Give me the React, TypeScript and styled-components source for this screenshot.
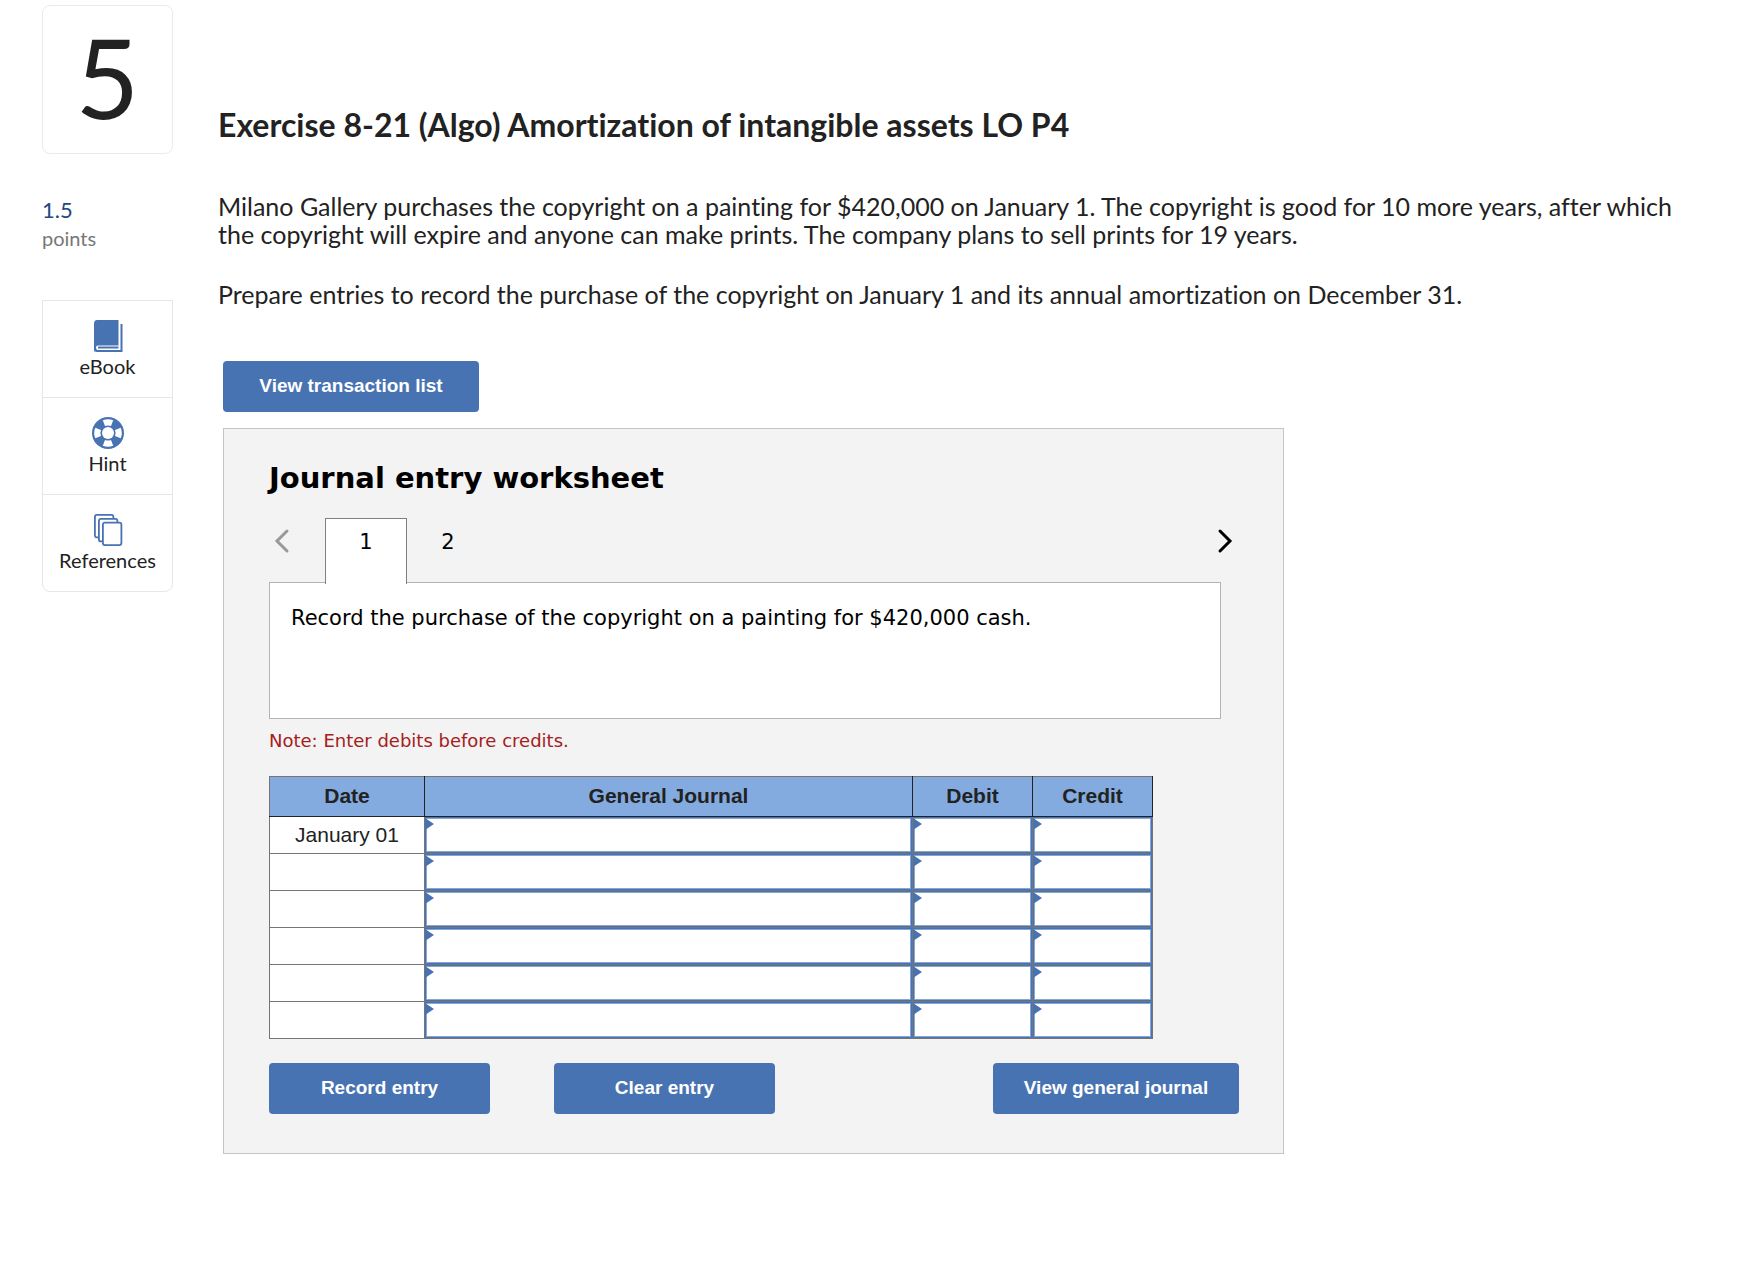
import React from "react";
import styled, { createGlobalStyle } from "styled-components";

const BLUE = "#4873b3";
const BODY_FONT = `Lato, "Open Sans", sans-serif`;
const SHEET_FONT = `Verdana, "DejaVu Sans", sans-serif`;
const GRID_FONT = `Arial, "Liberation Sans", sans-serif`;

const GlobalStyle = createGlobalStyle`
  *, *::before, *::after { box-sizing: border-box; }
  body {
    margin: 0;
    background: #fff;
    color: #222;
    font-family: ${BODY_FONT};
    font-variant-ligatures: none;
  }
  button, input { font: inherit; }
`;

const Page = styled.div`
  display: flex;
  align-items: flex-start;
  gap: 45px;
  padding: 5px 56px 48px 42px;
`;

const Sidebar = styled.aside`
  flex: none;
  width: 131px;
`;

const QuestionNumber = styled.div`
  display: flex;
  align-items: center;
  justify-content: center;
  height: 149px;
  padding-bottom: 8px;
  border: 1px solid #ebebeb;
  border-radius: 8px;
  font-size: 110px;
  line-height: 1;
`;

const Points = styled.div`
  margin: 42px 0 48px;
  font-size: 20px;
  line-height: 28px;
  color: #777;
`;

const PointsValue = styled.div`
  font-size: 22px;
  color: #23477f;
`;

const ToolList = styled.nav`
  display: flex;
  flex-direction: column;
  border: 1px solid #e6e6e6;
  border-radius: 0 0 8px 8px;
`;

const ToolLink = styled.a`
  box-sizing: content-box;
  display: flex;
  flex-direction: column;
  align-items: center;
  gap: 2px;
  height: 77px;
  padding-top: 19px;
  font-size: 20px;
  line-height: 24px;
  color: #222;
  text-decoration: none;

  & + & { border-top: 1px solid #e6e6e6; }
`;

const Main = styled.main`
  flex: 1;
  min-width: 0;
  padding-top: 102px;
`;

const Title = styled.h1`
  margin: 0 0 49px;
  font-size: 32px;
  line-height: 36px;
  font-weight: 700;
`;

const Paragraph = styled.p`
  margin: 0 0 32px;
  font-size: 25px;
  line-height: 28px;
`;

const Workspace = styled.section`
  display: flex;
  flex-direction: column;
  align-items: flex-start;
  gap: 16px;
  margin: 53px 0 0 5px;
`;

const Button = styled.button<{ $width: number }>`
  width: ${(p) => p.$width}px;
  height: 51px;
  padding: 0 0 2px;
  border: 0;
  border-radius: 4px;
  background: ${BLUE};
  color: #fff;
  font-family: ${GRID_FONT};
  font-size: 19px;
  font-weight: 700;
  cursor: pointer;
`;

const Worksheet = styled.div`
  width: 100%;
  max-width: 1061px;
  padding: 31px 44px 39px 45px;
  border: 1px solid #c4c4c4;
  background: #f3f3f3;
  font-family: ${SHEET_FONT};
  color: #000;
`;

const SheetTitle = styled.h2`
  margin: 0 0 22px;
  font-size: 29px;
  line-height: 36px;
  font-weight: 700;
`;

const TabBar = styled.div`
  display: flex;
  align-items: flex-start;
  margin-bottom: -2px;
`;

const Tabs = styled.div`
  flex: 1;
  display: flex;
  margin-left: 30px;
`;

const Arrow = styled.button`
  display: flex;
  align-items: center;
  justify-content: center;
  width: 26px;
  height: 46px;
  padding: 0;
  border: 0;
  background: none;
  color: #000;

  &:disabled { color: #999; }
`;

const Tab = styled.button<{ $active?: boolean }>`
  position: relative;
  width: 82px;
  height: 66px;
  padding: 0 0 20px;
  border: 1px solid ${(p) => (p.$active ? "#808080" : "transparent")};
  border-bottom: 0;
  background: ${(p) => (p.$active ? "#fff" : "none")};
  color: #000;
  font-size: 21px;
`;

const Instruction = styled.div`
  min-height: 137px;
  margin-right: 18px;
  padding: 21px;
  border: 1px solid #b3b3b3;
  background: #fff;
  font-size: 21px;
  line-height: 28px;
`;

const Note = styled.p`
  margin: 10px 0 23px;
  color: #a4201c;
  font-size: 18px;
  line-height: 24px;
`;

const JournalTable = styled.table`
  width: 884px;
  table-layout: fixed;
  border-collapse: collapse;
  background: #fff;
  color: #222;
  font-family: ${GRID_FONT};
  font-size: 21px;
  line-height: 24px;
`;

const Column = styled.col<{ $width: number }>`
  width: ${(p) => p.$width}px;
`;

const HeadCell = styled.th`
  height: 40px;
  padding: 0 0 2px;
  border: 1px solid #222;
  border-top-color: #757575;
  background: #84abe0;

  &:first-child { border-left-color: #757575; }
`;

const DateCell = styled.td`
  height: 37px;
  padding: 0;
  border: 1px solid #757575;
  text-align: center;
`;

const EntryCell = styled.td`
  position: relative;
  height: 37px;
  padding: 0;
  border: 1px solid #757575;

  &::before {
    content: "";
    position: absolute;
    top: 1px;
    left: 0;
    width: 9px;
    height: 12px;
    background: ${BLUE};
    clip-path: polygon(0 0, 100% 50%, 0 100%);
    pointer-events: none;
  }
`;

const EntryInput = styled.input`
  display: block;
  width: 100%;
  height: 36px;
  padding: 0 12px;
  border: 1px solid ${BLUE};
  border-radius: 0;
  outline: 0;
  box-shadow: inset 0 0 0 1px #86a6d6;
  background: #fff;
`;

const Actions = styled.div`
  display: flex;
  gap: 64px;
  margin-top: 24px;

  & > :last-child { margin-left: auto; }
`;

const BookIcon = () => (
  <svg width="32" height="32" viewBox="0 0 32 32" fill="none" aria-hidden="true">
    <path d="M5 0H26.500V24H6.500C4 24 3 26 3 28V32C2 31 2 30 2 29V4Q2 0 5 0Z" fill={BLUE} />
    <path d="M2 24V29Q2 32 5 32H30.500V4H28.500V30H6Q4 30 4 27.500Q4 25.500 6 25.500H26.500V24Z" fill={BLUE} />
    <path d="M6 27.500H26.500" stroke={BLUE} strokeWidth="2" />
  </svg>
);

const HintIcon = () => (
  <svg width="32" height="32" viewBox="0 0 32 32" fill="none" aria-hidden="true">
    <circle cx="16" cy="16" r="16" fill={BLUE} />
    <g fill="#fff">
      {[0, 90, 180, 270].map((turn) => (
        <path
          key={turn}
          d="M10.800 3.300Q16 1 21.200 3.300L19 9Q16 7.800 13 9Z"
          transform={`rotate(${turn} 16 16)`}
        />
      ))}
      <circle cx="16" cy="16" r="6" />
    </g>
  </svg>
);

const ReferencesIcon = () => (
  <svg width="32" height="32" viewBox="0 0 32 32" aria-hidden="true">
    <g fill="#fff" stroke={BLUE} strokeWidth="1.800">
      <rect x="2.900" y="0.900" width="18.500" height="22.500" rx="2" />
      <rect x="6.900" y="4.900" width="18.500" height="22.500" rx="2" />
      <rect x="10.900" y="8.600" width="18.500" height="22.500" rx="2" />
    </g>
  </svg>
);

const Chevron = ({ points }: { points: string }) => (
  <svg width="26" height="26" viewBox="0 0 26 26" fill="none" aria-hidden="true">
    <polyline points={points} stroke="currentColor" strokeWidth="3" strokeLinecap="round" />
  </svg>
);

const tools = [
  { label: "eBook", Icon: BookIcon },
  { label: "Hint", Icon: HintIcon },
  { label: "References", Icon: ReferencesIcon },
];

const entryColumns = ["General Journal", "Debit", "Credit"];
const dates = ["January 01", "", "", "", "", ""];

export default function App() {
  return (
    <Page>
      <GlobalStyle />
      <Sidebar>
        <QuestionNumber>5</QuestionNumber>
        <Points>
          <PointsValue>1.5</PointsValue>
          points
        </Points>
        <ToolList>
          {tools.map(({ label, Icon }) => (
            <ToolLink key={label} href="#">
              <Icon />
              {label}
            </ToolLink>
          ))}
        </ToolList>
      </Sidebar>
      <Main>
        <Title>Exercise 8-21 (Algo) Amortization of intangible assets LO P4</Title>
        <Paragraph>
          Milano Gallery purchases the copyright on a painting for $420,000 on January 1. The
          copyright is good for 10 more years, after which the copyright will expire and anyone can
          make prints. The company plans to sell prints for 19 years.
        </Paragraph>
        <Paragraph>
          Prepare entries to record the purchase of the copyright on January 1 and its annual
          amortization on December 31.
        </Paragraph>
        <Workspace>
          <Button type="button" $width={256}>View transaction list</Button>
          <Worksheet>
            <SheetTitle>Journal entry worksheet</SheetTitle>
            <TabBar>
              <Arrow type="button" aria-label="Previous entry" disabled>
                <Chevron points="18,3 8,13 18,23" />
              </Arrow>
              <Tabs role="tablist">
                <Tab type="button" role="tab" aria-selected="true" $active>1</Tab>
                <Tab type="button" role="tab" aria-selected="false">2</Tab>
              </Tabs>
              <Arrow type="button" aria-label="Next entry">
                <Chevron points="7,3 17,13 7,23" />
              </Arrow>
            </TabBar>
            <Instruction>
              Record the purchase of the copyright on a painting for $420,000 cash.
            </Instruction>
            <Note>Note: Enter debits before credits.</Note>
            <JournalTable>
              <colgroup>
                <Column $width={155} />
                <Column $width={488} />
                <Column $width={120} />
                <Column $width={120} />
              </colgroup>
              <thead>
                <tr>
                  <HeadCell scope="col">Date</HeadCell>
                  {entryColumns.map((name) => (
                    <HeadCell key={name} scope="col">{name}</HeadCell>
                  ))}
                </tr>
              </thead>
              <tbody>
                {dates.map((date, row) => (
                  <tr key={row}>
                    <DateCell>{date}</DateCell>
                    {entryColumns.map((name) => (
                      <EntryCell key={name}>
                        <EntryInput type="text" aria-label={`${name}, row ${row + 1}`} />
                      </EntryCell>
                    ))}
                  </tr>
                ))}
              </tbody>
            </JournalTable>
            <Actions>
              <Button type="button" $width={221}>Record entry</Button>
              <Button type="button" $width={221}>Clear entry</Button>
              <Button type="button" $width={246}>View general journal</Button>
            </Actions>
          </Worksheet>
        </Workspace>
      </Main>
    </Page>
  );
}
